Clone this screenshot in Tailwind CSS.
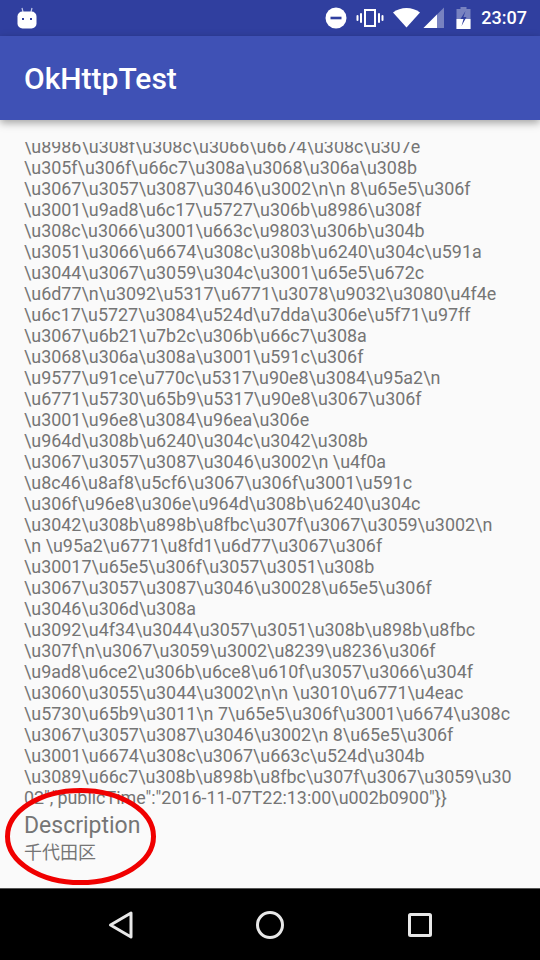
<!DOCTYPE html>
<html lang="en">
<head>
  <meta charset="UTF-8">
  <title>OkHttpTest</title>
  <script src="https://cdn.jsdelivr.net/npm/@tailwindcss/browser@4"></script>
</head>
<body class="w-[540px] h-[960px] overflow-hidden flex flex-col bg-[#fafafa] font-['Roboto','Noto_Sans_CJK_JP',sans-serif]">
  <!-- status bar -->
  <div class="h-9 shrink-0 bg-[#303f9f] flex items-center pl-[17px] pr-[13px] text-white">
    <svg width="20" height="22" viewBox="0 0 20 22" fill="#fff">
      <path d="M5 1 L6 5 M15 1 L14 5" stroke="#c5cae9" stroke-width="1.2"/>
      <rect x="0.500" y="4.500" width="19" height="17" rx="5"/>
      <rect x="5" y="11" width="2" height="2" fill="#303f9f"/>
      <rect x="13" y="11" width="2" height="2" fill="#303f9f"/>
    </svg>
    <div class="ml-auto flex items-center">
      <svg width="22" height="22" viewBox="0 0 22 22" class="mr-[9px]">
        <circle cx="11" cy="11" r="10.500" fill="#fff"/>
        <rect x="5.500" y="9.700" width="11" height="2.600" fill="#303f9f"/>
      </svg>
      <svg width="28" height="22" viewBox="0 0 28 22" fill="#fff" class="mr-[9px]">
        <path fill-rule="evenodd" d="M8 2h12v18H8z M10 4v14h8V4z"/>
        <rect x="4" y="6" width="2" height="10" rx="1"/>
        <rect x="22" y="6" width="2" height="10" rx="1"/>
        <rect x="0.500" y="8" width="2" height="6" rx="1"/>
        <rect x="25.500" y="8" width="2" height="6" rx="1"/>
      </svg>
      <svg width="27" height="20" viewBox="0 0 27 20" fill="#fff">
        <path d="M0 4.500 C7.500 -1.500 19.500 -1.500 27 4.500 L13.500 19.500 Z"/>
      </svg>
      <svg width="22" height="22" viewBox="0 0 22 22" class="ml-[3px] mr-[11px]">
        <path d="M0.500 21 L21 0.500 V21 Z" fill="#fff" fill-opacity="0.35"/>
        <path d="M0.500 21 L14 7.500 V21 Z" fill="#fff"/>
      </svg>
      <svg width="15" height="22" viewBox="0 0 15 22" class="mr-[10px]">
        <path d="M4.500 0h6v2h4v20H0.500V2h4z" fill="#fff" fill-opacity="0.35"/>
        <path d="M0.500 12h14v10H0.500z" fill="#fff"/>
        <path d="M9.500 4 L4.500 12 H7.500 L5.500 19 L10.500 10 H7.500z" fill="#303f9f"/>
      </svg>
      <span class="text-[18px] font-medium leading-none">23:07</span>
    </div>
  </div>
  <!-- app bar -->
  <div class="relative z-10 h-[84px] shrink-0 bg-[#3f51b5] flex items-center pl-6 pt-[2px] shadow-[0_3px_8px_rgba(0,0,0,0.35)]">
    <h1 class="text-[30px] font-medium text-white leading-none">OkHttpTest</h1>
  </div>
  <!-- content -->
  <div class="relative flex-1 overflow-hidden px-6 pt-[22px] text-[#757575]">
    <div class="overflow-hidden">
      <div class="-mt-[6.500px] text-[17.900px] leading-[21px] whitespace-pre">\u8986\u308f\u308c\u3066\u6674\u308c\u307e
\u305f\u306f\u66c7\u308a\u3068\u306a\u308b
\u3067\u3057\u3087\u3046\u3002\n\n 8\u65e5\u306f
\u3001\u9ad8\u6c17\u5727\u306b\u8986\u308f
\u308c\u3066\u3001\u663c\u9803\u306b\u304b
\u3051\u3066\u6674\u308c\u308b\u6240\u304c\u591a
\u3044\u3067\u3059\u304c\u3001\u65e5\u672c
\u6d77\n\u3092\u5317\u6771\u3078\u9032\u3080\u4f4e
\u6c17\u5727\u3084\u524d\u7dda\u306e\u5f71\u97ff
\u3067\u6b21\u7b2c\u306b\u66c7\u308a
\u3068\u306a\u308a\u3001\u591c\u306f
\u9577\u91ce\u770c\u5317\u90e8\u3084\u95a2\n
\u6771\u5730\u65b9\u5317\u90e8\u3067\u306f
\u3001\u96e8\u3084\u96ea\u306e
\u964d\u308b\u6240\u304c\u3042\u308b
\u3067\u3057\u3087\u3046\u3002\n \u4f0a
\u8c46\u8af8\u5cf6\u3067\u306f\u3001\u591c
\u306f\u96e8\u306e\u964d\u308b\u6240\u304c
\u3042\u308b\u898b\u8fbc\u307f\u3067\u3059\u3002\n
\n \u95a2\u6771\u8fd1\u6d77\u3067\u306f
\u30017\u65e5\u306f\u3057\u3051\u308b
\u3067\u3057\u3087\u3046\u30028\u65e5\u306f
\u3046\u306d\u308a
\u3092\u4f34\u3044\u3057\u3051\u308b\u898b\u8fbc
\u307f\n\u3067\u3059\u3002\u8239\u8236\u306f
\u9ad8\u6ce2\u306b\u6ce8\u610f\u3057\u3066\u304f
\u3060\u3055\u3044\u3002\n\n \u3010\u6771\u4eac
\u5730\u65b9\u3011\n 7\u65e5\u306f\u3001\u6674\u308c
\u3067\u3057\u3087\u3046\u3002\n 8\u65e5\u306f
\u3001\u6674\u308c\u3067\u663c\u524d\u304b
\u3089\u66c7\u308b\u898b\u8fbc\u307f\u3067\u3059\u30
02","publicTime":"2016-11-07T22:13:00\u002b0900"}}</div>
    </div>
    <div class="mt-[4.500px] text-[23px] leading-[28px]">Description</div>
    <div class="mt-[1px] text-[18px] leading-[24px]">千代田区</div>
    <!-- red hand-drawn circle over the screenshot -->
    <svg class="absolute left-0 top-[664px]" width="160" height="108" viewBox="0 0 160 108">
      <ellipse cx="80.500" cy="52.500" rx="73" ry="46" fill="none" stroke="#f00000" stroke-width="5"/>
    </svg>
  </div>
  <!-- nav bar -->
  <div class="h-[72px] shrink-0 bg-black border-t border-[#555] flex items-center justify-center gap-[120px]">
    <svg width="30" height="30" viewBox="0 0 30 30" fill="none" stroke="#e8e8e8" stroke-width="3" stroke-linejoin="round">
      <path d="M26 3 V27 L5.500 15 Z"/>
    </svg>
    <svg width="30" height="30" viewBox="0 0 30 30" fill="none" stroke="#e8e8e8" stroke-width="3">
      <circle cx="15" cy="15" r="12.500"/>
    </svg>
    <svg width="30" height="30" viewBox="0 0 30 30" fill="none" stroke="#e8e8e8" stroke-width="3" stroke-linejoin="round">
      <rect x="4.500" y="4.500" width="21" height="21" rx="1"/>
    </svg>
  </div>
</body>
</html>
